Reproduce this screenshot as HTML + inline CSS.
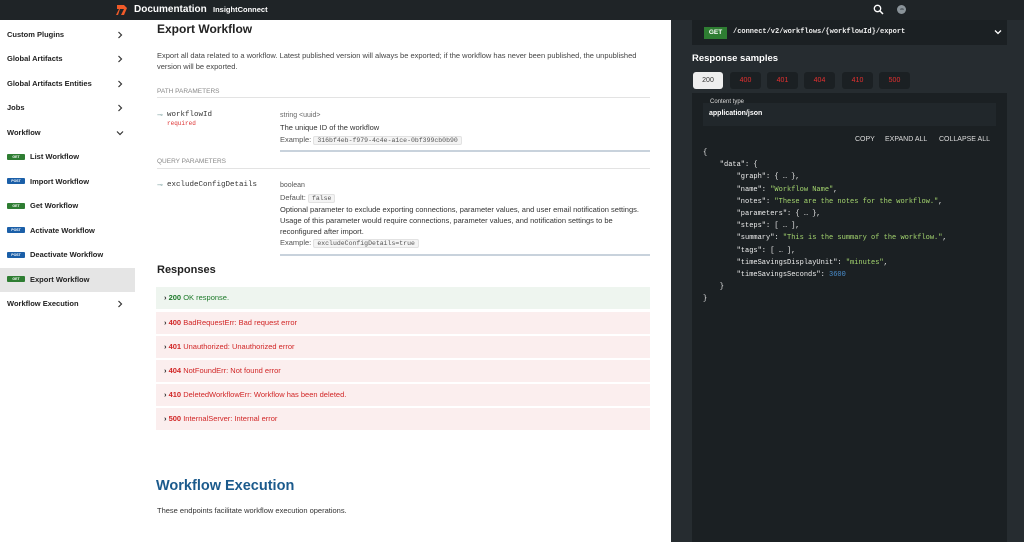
<!DOCTYPE html>
<html><head><meta charset="utf-8"><style>
*{margin:0;padding:0;box-sizing:border-box}
body{width:1024px;height:542px;overflow:hidden;position:relative;background:#fff;font-family:"Liberation Sans",sans-serif;color:#333}
.a{position:absolute;white-space:nowrap}
.top{position:absolute;left:0;top:0;width:1024px;height:20px;background:#1f2427}
.side{position:absolute;left:0;top:20px;width:135px;height:522px;background:#fff}
.si{position:absolute;left:7px;font-size:7.5px;font-weight:bold;color:#222;line-height:10px}
.ch{position:absolute;left:117px;width:6px;height:8px}
.b{position:absolute;left:7px;width:18px;height:6px;border-radius:1px;font-size:3.5px;color:#fff;font-weight:bold;text-align:center;line-height:6px}
.g{background:#2e7d32}.p{background:#1b5fa8}
.mono{font-family:"Liberation Mono",monospace}
.t8{font-size:7.5px;line-height:10px}
.code{background:#f4f4f4;border:1px solid #e2e2e2;border-radius:2px;padding:0 3px;font-family:"Liberation Mono",monospace;font-size:6.5px}
.line{position:absolute;height:1px;background:#e3e3e3}
.bl{position:absolute;height:1.5px;background:#c8d2dc}
.r{position:absolute;left:156px;width:494px;height:22px;font-size:7.5px;line-height:22px;padding-left:8px}
.r400{background:#fbeeee;color:#d12626}
.r200{background:#eef5ef;color:#1d7a2a}
.r b{font-weight:bold}
.right{position:absolute;left:671px;top:20px;width:353px;height:522px;background:#262c30}
.tab{position:absolute;top:72px;width:31px;height:17px;background:#1b2023;border-radius:3px;color:#e53030;font-size:7px;text-align:center;line-height:17px}
.cl{position:absolute;font-family:"Liberation Mono",monospace;font-size:7px;color:#eee;line-height:10px;white-space:pre}
.s{color:#a5d66f}.n{color:#4a8fd0}
</style></head><body>
<div class="top"></div>
<svg class="a" style="left:116px;top:4px" width="12" height="12" viewBox="0 0 12 12"><path d="M1 1h7l3 3-3 7H5l3-6H4l-2 6H0l3-6H1z" fill="#f05a28"/></svg>
<div class="a" style="left:134px;top:3px;font-size:10px;font-weight:bold;color:#fff;line-height:13px">Documentation</div>
<div class="a" style="left:213px;top:5px;font-size:7.5px;font-weight:bold;color:#fff;line-height:10px">InsightConnect</div>
<svg class="a" style="left:873px;top:4px" width="11" height="11" viewBox="0 0 11 11"><circle cx="4.5" cy="4.5" r="3.2" stroke="#fff" stroke-width="1.3" fill="none"/><path d="M7 7l3 3" stroke="#fff" stroke-width="1.5"/></svg>
<div class="a" style="left:897px;top:5px;width:9px;height:9px;border-radius:50%;background:#8a9399"></div>
<div class="a" style="left:899.5px;top:8px;width:4px;height:2px;border-radius:2px 2px 0 0;background:#5d666c"></div>

<div class="side"></div>
<div class="si" style="top:30px">Custom Plugins</div><svg class="ch" style="top:31px" viewBox="0 0 6 8"><path d="M1.5 1l3 3-3 3" stroke="#333" stroke-width="1.2" fill="none"/></svg>
<div class="si" style="top:54px">Global Artifacts</div><svg class="ch" style="top:55px" viewBox="0 0 6 8"><path d="M1.5 1l3 3-3 3" stroke="#333" stroke-width="1.2" fill="none"/></svg>
<div class="si" style="top:79px">Global Artifacts Entities</div><svg class="ch" style="top:80px" viewBox="0 0 6 8"><path d="M1.5 1l3 3-3 3" stroke="#333" stroke-width="1.2" fill="none"/></svg>
<div class="si" style="top:103px">Jobs</div><svg class="ch" style="top:104px" viewBox="0 0 6 8"><path d="M1.5 1l3 3-3 3" stroke="#333" stroke-width="1.2" fill="none"/></svg>
<div class="si" style="top:128px">Workflow</div><svg class="a" style="left:116px;top:130px" width="8" height="6" viewBox="0 0 8 6"><path d="M1 1.5l3 3 3-3" stroke="#333" stroke-width="1.2" fill="none"/></svg>
<div class="a" style="left:0;top:268px;width:135px;height:24px;background:#e5e5e5"></div>
<div class="b g" style="top:154px">GET</div><div class="si" style="left:30px;top:152px">List Workflow</div>
<div class="b p" style="top:178px">POST</div><div class="si" style="left:30px;top:177px">Import Workflow</div>
<div class="b g" style="top:203px">GET</div><div class="si" style="left:30px;top:201px">Get Workflow</div>
<div class="b p" style="top:227px">POST</div><div class="si" style="left:30px;top:226px">Activate Workflow</div>
<div class="b p" style="top:252px">POST</div><div class="si" style="left:30px;top:250px">Deactivate Workflow</div>
<div class="b g" style="top:276px">GET</div><div class="si" style="left:30px;top:275px">Export Workflow</div>
<div class="si" style="top:299px">Workflow Execution</div><svg class="ch" style="top:300px" viewBox="0 0 6 8"><path d="M1.5 1l3 3-3 3" stroke="#333" stroke-width="1.2" fill="none"/></svg>

<div class="a" style="left:157px;top:22px;font-size:12px;font-weight:bold;color:#222;line-height:15px">Export Workflow</div>
<div class="a t8" style="left:157px;top:50px;color:#444;line-height:11px">Export all data related to a workflow. Latest published version will always be exported; if the workflow has never been published, the unpublished<br>version will be exported.</div>
<div class="a" style="left:157px;top:88px;font-size:6.5px;color:#888">PATH PARAMETERS</div>
<div class="line" style="left:157px;top:97px;width:493px"></div>
<div class="a" style="left:157px;top:111px;font-size:7px;color:#8aa">⊸</div>
<div class="a mono" style="left:167px;top:111px;font-size:7.5px;color:#333">workflowId</div>
<div class="a mono" style="left:167px;top:120px;font-size:6px;color:#d33">required</div>
<div class="a" style="left:280px;top:112px;font-size:7px;color:#666">string &lt;uuid&gt;</div>
<div class="a t8" style="left:280px;top:123px;color:#333">The unique ID of the workflow</div>
<div class="a t8" style="left:280px;top:135px;color:#555">Example: <span class="code">316bf4eb-f979-4c4e-a1ce-0bf399cb0b90</span></div>
<div class="bl" style="left:280px;top:150px;width:370px"></div>
<div class="a" style="left:157px;top:158px;font-size:6.5px;color:#888">QUERY PARAMETERS</div>
<div class="line" style="left:157px;top:168px;width:493px"></div>
<div class="a" style="left:157px;top:181px;font-size:7px;color:#8aa">⊸</div>
<div class="a mono" style="left:167px;top:181px;font-size:7.5px;color:#333">excludeConfigDetails</div>
<div class="a" style="left:280px;top:182px;font-size:7px;color:#555">boolean</div>
<div class="a t8" style="left:280px;top:193px;color:#555">Default: <span class="code">false</span></div>
<div class="a t8" style="left:280px;top:204px;color:#333;line-height:11px">Optional parameter to exclude exporting connections, parameter values, and user email notification settings.<br>Usage of this parameter would require connections, parameter values, and notification settings to be<br>reconfigured after import.</div>
<div class="a t8" style="left:280px;top:238px;color:#555">Example: <span class="code">excludeConfigDetails=true</span></div>
<div class="bl" style="left:280px;top:254px;width:370px"></div>
<div class="a" style="left:157px;top:263px;font-size:11px;font-weight:bold;color:#222;line-height:14px">Responses</div>
<div class="r r200" style="top:287px"><b style="color:#222">›</b> <b>200</b> OK response.</div>
<div class="r r400" style="top:312px"><b style="color:#222">›</b> <b>400</b> BadRequestErr: Bad request error</div>
<div class="r r400" style="top:336px"><b style="color:#222">›</b> <b>401</b> Unauthorized: Unauthorized error</div>
<div class="r r400" style="top:360px"><b style="color:#222">›</b> <b>404</b> NotFoundErr: Not found error</div>
<div class="r r400" style="top:384px"><b style="color:#222">›</b> <b>410</b> DeletedWorkflowErr: Workflow has been deleted.</div>
<div class="r r400" style="top:408px"><b style="color:#222">›</b> <b>500</b> InternalServer: Internal error</div>
<div class="a" style="left:156px;top:477px;font-size:14.5px;font-weight:bold;color:#1b5a8c;line-height:18px">Workflow Execution</div>
<div class="a t8" style="left:157px;top:506px;color:#333">These endpoints facilitate workflow execution operations.</div>

<div class="right"></div>
<div class="a" style="left:692px;top:20px;width:315px;height:25px;background:#1b2023"></div>
<div class="a" style="left:704px;top:27px;width:23px;height:12px;background:#2e7d32;color:#fff;font-size:6.5px;font-weight:bold;text-align:center;line-height:12px">GET</div>
<div class="a mono" style="left:733px;top:28px;font-size:7px;font-weight:bold;color:#eee">/connect/v2/workflows/{workflowId}/export</div>
<svg class="a" style="left:994px;top:29px" width="8" height="6" viewBox="0 0 8 6"><path d="M1 1.5l3 3 3-3" stroke="#fff" stroke-width="1.3" fill="none"/></svg>
<div class="a" style="left:692px;top:53px;font-size:9.5px;font-weight:bold;color:#fff;line-height:12px">Response samples</div>
<div class="tab" style="left:693px;background:#eee;color:#333;width:30px">200</div>
<div class="tab" style="left:730px">400</div>
<div class="tab" style="left:767px">401</div>
<div class="tab" style="left:804px">404</div>
<div class="tab" style="left:842px">410</div>
<div class="tab" style="left:879px">500</div>
<div class="a" style="left:692px;top:93px;width:315px;height:449px;background:#1b2023"></div>
<div class="a" style="left:703px;top:103px;width:293px;height:23px;background:#21272b"></div>
<div class="a" style="left:710px;top:99px;font-size:6px;color:#ddd">Content type</div>
<div class="a" style="left:709px;top:110px;font-size:7px;font-weight:bold;color:#fff">application/json</div>
<div class="a" style="left:855px;top:136px;font-size:7px;color:#ddd">COPY</div>
<div class="a" style="left:885px;top:136px;font-size:7px;color:#ddd">EXPAND ALL</div>
<div class="a" style="left:939px;top:136px;font-size:7px;color:#ddd">COLLAPSE ALL</div>
<div class="cl" style="left:703px;top:147px;line-height:12.2px">{
    "data": {
        "graph": { … },
        "name": <span class="s">"Workflow Name"</span>,
        "notes": <span class="s">"These are the notes for the workflow."</span>,
        "parameters": { … },
        "steps": [ … ],
        "summary": <span class="s">"This is the summary of the workflow."</span>,
        "tags": [ … ],
        "timeSavingsDisplayUnit": <span class="s">"minutes"</span>,
        "timeSavingsSeconds": <span class="n">3600</span>
    }
}</div>
</body></html>
